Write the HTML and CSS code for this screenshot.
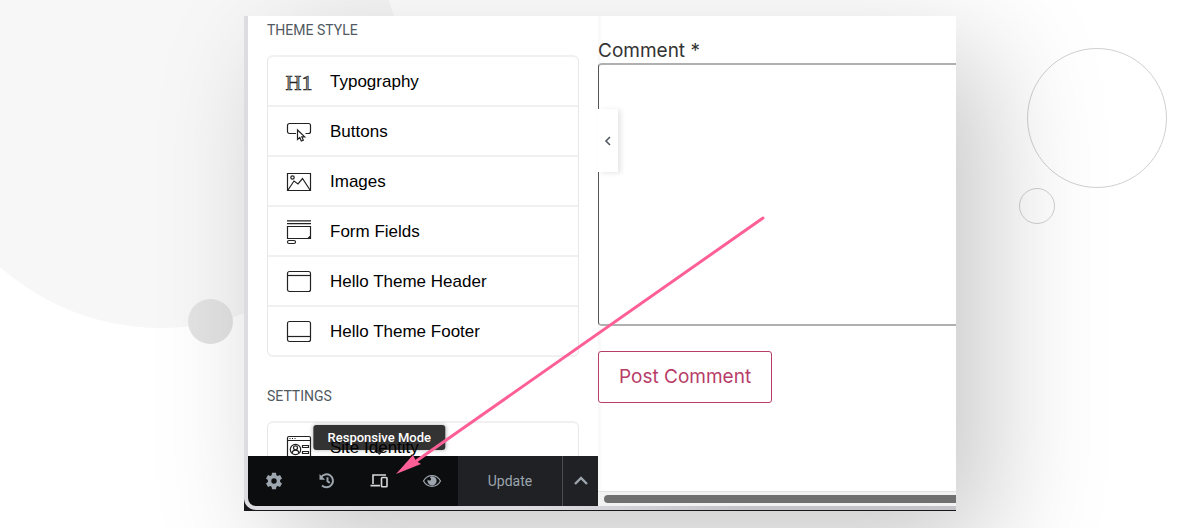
FILE: index.html
```html
<!DOCTYPE html>
<html lang="en">
<head>
<meta charset="utf-8">
<title>Site Settings</title>
<link rel="stylesheet" href="styles.css">
</head>
<body>
<div class="stage">
  <span class="blob blob-large"></span>
  <span class="blob blob-small"></span>
  <span class="ring ring-large"></span>
  <span class="ring ring-small"></span>

  <main class="window">
    <div class="frame">
      <aside class="sidebar">
        <div class="panel">
          <h2 class="heading">THEME STYLE</h2>
          <nav class="card">
            <button class="item" type="button">
              <svg class="item-icon" viewBox="0 0 24 24" aria-hidden="true"><text class="item-glyph" x="12" y="20" text-anchor="middle">H1</text></svg>
              Typography
            </button>
            <button class="item" type="button">
              <svg class="item-icon" viewBox="0 0 24 24"><path d="M9 13.500H2.500a2 2 0 0 1-2-2v-6a2 2 0 0 1 2-2h19a2 2 0 0 1 2 2v6a2 2 0 0 1-2 2h-3M10.500 10v9.500l2.300-2 1.500 3.500 2-.9-1.500-3.300h2.900z"/></svg>
              Buttons
            </button>
            <button class="item" type="button">
              <svg class="item-icon" viewBox="0 0 24 24"><path d="M.5 3.500h23v17H.5zM1 20l6-9 4 3 4.500-5.500L23 20"/><circle cx="5.500" cy="7.500" r="1.700"/></svg>
              Images
            </button>
            <button class="item" type="button">
              <svg class="item-icon" viewBox="0 0 24 24"><path d="M0 .8h24M0 3.700h24M.5 6.500h23v12H.5zM21 18.500l2.500-2.500v2.500z"/><rect x=".5" y="20.500" width="8" height="3" rx="1.500"/></svg>
              Form Fields
            </button>
            <button class="item" type="button">
              <svg class="item-icon" viewBox="0 0 24 24"><rect x=".5" y="1.500" width="23" height="20" rx="2"/><path d="M.5 5.500h23"/></svg>
              Hello Theme Header
            </button>
            <button class="item" type="button">
              <svg class="item-icon" viewBox="0 0 24 24"><rect x=".5" y="1.500" width="23" height="20" rx="2"/><path d="M.5 16.500h23"/></svg>
              Hello Theme Footer
            </button>
          </nav>
          <h2 class="heading">SETTINGS</h2>
          <nav class="card">
            <button class="item" type="button">
              <svg class="item-icon" viewBox="0 0 24 24"><rect x=".5" y=".5" width="23" height="23" rx="1.500"/><path d="M.5 4.500h23M2.500 2.500h1M5 2.500h1M7.500 2.500h1M15.500 9.500h6v2h-6zM15.500 15.500h6v2h-6z"/><circle cx="8.500" cy="13.500" r="5.200"/><circle cx="8.500" cy="11.800" r="2"/><path d="M5 17c.5-2 2-2.800 3.500-2.800s3 .8 3.500 2.800"/></svg>
              Site Identity
            </button>
          </nav>
        </div>
        <footer class="toolbar">
          <button class="tool" type="button" aria-label="Settings">
            <svg viewBox="0 0 20 20"><path fill="currentColor" fill-rule="evenodd" d="M8 1.800h4l.4 2.400 1.300.8 2.300-.9 2 3.300-1.900 1.500v2.200l1.900 1.500-2 3.300-2.300-.9-1.300.8-.4 2.400H8l-.4-2.400-1.300-.8-2.300.9-2-3.300 1.900-1.500V8.900L2 7.400l2-3.300 2.300.9 1.300-.8zM10 7.300a2.700 2.700 0 1 0 0 5.400 2.700 2.700 0 0 0 0-5.400z"/></svg>
          </button>
          <button class="tool" type="button" aria-label="History">
            <svg viewBox="0 0 20 20" class="line"><path d="M4 6.300A6.500 6.500 0 1 1 5 14.500M10.500 6.300v4l2.300 1.500" stroke-width="2"/><path fill="currentColor" stroke="none" d="M2.500 3v5.700h5.700z"/></svg>
          </button>
          <div class="tool-wrap">
            <button class="tool tool-active" type="button" aria-label="Responsive Mode" aria-describedby="tip">
              <svg viewBox="0 0 20 20" class="line"><path d="M4 13V4h13M1.500 14.600h9.500" stroke-width="1.600"/><rect x="12.500" y="6.500" width="5.500" height="9.200" rx=".8" stroke-width="1.600"/></svg>
            </button>
            <span class="tooltip" role="tooltip" id="tip">Responsive Mode</span>
          </div>
          <button class="tool" type="button" aria-label="Preview">
            <svg viewBox="0 0 20 20" class="line"><path d="M1.500 10C3.500 6.400 6.500 4.700 10 4.700s6.500 1.700 8.500 5.300c-2 3.600-5 5.300-8.500 5.300S3.500 13.600 1.500 10z" stroke-width="1.200"/><path fill="currentColor" stroke="none" d="M10 5.200A4.600 4.600 0 1 1 5.700 8.300c.5 1.800 3.500 1.600 3.300-.3-.1-.9-.6-1.400-1.200-1.600.7-.8 1.300-1.200 2.200-1.200z"/></svg>
          </button>
          <button class="update" type="button">Update</button>
          <button class="more" type="button" aria-label="Save options">
            <svg viewBox="0 0 16 16" class="line"><path d="M2 11l6-6 6 6" stroke-width="2.400"/></svg>
          </button>
        </footer>
      </aside>

      <section class="preview">
        <form class="comment-form">
          <label class="label" for="comment">Comment *</label>
          <textarea class="textarea" id="comment"></textarea>
          <button class="post" type="button">Post Comment</button>
        </form>
        <div class="scrollbar"><span class="thumb"></span></div>
        <button class="handle" type="button" aria-label="Hide panel">
          <svg viewBox="0 0 10 10" class="line"><path d="M7 1L3 5l4 4" stroke-width="1.600"/></svg>
        </button>
      </section>
    </div>
    <svg class="pointer" viewBox="0 0 712 495"><path d="M519 202L168 448" fill="none" stroke="#fd5f96" stroke-width="3" stroke-linecap="round"/><path d="M152 458l17-19 3 6 5 3z" fill="#fd5f96"/></svg>
  </main>
</div>
</body>
</html>
```
FILE: styles.css
```css
* {
  box-sizing: border-box;
}

body {
  margin: 0;
  background: #fff;
  font-family: Roboto, "Liberation Sans", sans-serif;
}

button {
  margin: 0;
  padding: 0;
  border: 0;
  background: none;
  font: inherit;
  color: inherit;
}

.stage {
  position: relative;
  height: 100vh;
  padding-top: 16px;
  overflow: hidden;
}

/* Backdrop shapes */
.blob,
.ring {
  position: absolute;
  border-radius: 50%;
}

.blob-large {
  left: -82px;
  top: -158px;
  width: 486px;
  height: 486px;
  background: #f7f7f7;
}

.blob-small {
  left: 188px;
  top: 299px;
  width: 45px;
  height: 45px;
  background: #e3e3e3;
}

.ring {
  border: 1px solid #d0d0d0;
}

.ring-large {
  left: 1027px;
  top: 48px;
  width: 140px;
  height: 140px;
}

.ring-small {
  left: 1019px;
  top: 188px;
  width: 36px;
  height: 36px;
}

/* Application window */
.window {
  position: relative;
  width: min(712px, 100%);
  height: calc(100vh - 33px);
  margin: 0 auto;
  padding-bottom: 1px;
  background: #17171a;
  box-shadow: 32px 36px 110px rgba(0, 0, 0, 0.22);
}

.frame {
  display: flex;
  height: 100%;
  padding: 0 0 4px 4px;
  border-bottom-left-radius: 12px;
  background: linear-gradient(90deg, #dcdce1 40%, #c4c4c8 70%);
}

.sidebar {
  display: flex;
  flex-direction: column;
  width: 350px;
  border-bottom-left-radius: 8px;
  background: #fff;
}

.panel {
  flex: 1;
  min-height: 0;
  padding: 6px 19px 0;
  overflow: hidden;
}

.heading {
  margin: 0 0 17px;
  font-size: 14px;
  font-weight: 400;
  line-height: 16px;
  color: #515962;
}

.card + .heading {
  margin-top: 31px;
}

.card {
  display: flex;
  flex-direction: column;
  border: 1px solid #e8e8ea;
  border-width: 2px 1px;
  border-color: #f0f0f1 #e8e8ea;
  border-radius: 6px;
}

.item {
  display: flex;
  align-items: center;
  gap: 19px;
  height: 48px;
  padding: 2px 0 0 19px;
  font-family: "Liberation Sans", sans-serif;
  font-size: 17px;
  color: #000;
}

.item + .item {
  height: 50px;
  border-top: 2px solid #f0f0f1;
}

.item-icon {
  width: 24px;
  height: 24px;
  overflow: visible;
  fill: none;
  stroke: #222;
  stroke-width: 1.2;
}

.item-glyph {
  fill: #999;
  stroke-width: 0.7;
  font-family: "Liberation Serif", serif;
  font-size: 22px;
}

/* Bottom toolbar */
.toolbar {
  display: grid;
  grid-template-columns: repeat(4, 1fr) 104px 36px;
  height: 50px;
  border-bottom-left-radius: 8px;
  background: #0c0d0e;
  color: #9da5ae;
}

.tool,
.more {
  display: flex;
  align-items: center;
  justify-content: center;
}

.tool {
  width: 100%;
  height: 100%;
}

.tool svg {
  width: 20px;
  height: 20px;
}

.line {
  fill: none;
  stroke: currentColor;
}

.tool-wrap {
  position: relative;
}

.tool-active {
  color: #d5d8dc;
}

.tooltip {
  position: absolute;
  bottom: 56px;
  left: 50%;
  padding: 0 14px;
  border-radius: 3px;
  background: rgba(0, 0, 0, 0.8);
  box-shadow: 0 0 4px rgba(0, 0, 0, 0.3);
  font-size: 13px;
  font-weight: 500;
  line-height: 25px;
  white-space: nowrap;
  color: #fff;
  transform: translateX(-50%);
}

.tooltip::after {
  content: "";
  position: absolute;
  top: 100%;
  left: 50%;
  margin-left: -5px;
  border: 5px solid transparent;
  border-top-color: rgba(0, 0, 0, 0.8);
}

.update,
.more {
  background: #1f2124;
}

.update {
  font-size: 14px;
}

.more {
  border-left: 1px solid #4a4c50;
}

.more svg {
  width: 16px;
  height: 16px;
}

/* Page preview */
.preview {
  position: relative;
  display: flex;
  flex: 1;
  flex-direction: column;
  min-width: 0;
  background: linear-gradient(90deg, #f7f7f7, #fff 5px);
  font-family: Inter, "Liberation Sans", sans-serif;
  font-size: 19px;
}

.comment-form {
  display: flex;
  flex: 1;
  flex-direction: column;
  align-items: flex-start;
  min-height: 0;
  padding-top: 23px;
}

.label {
  line-height: 24px;
  color: #333;
}

.textarea {
  width: 100%;
  height: 263px;
  border: 1px solid #666;
  border-width: 2px 0 2px 1px;
  border-color: #b0b0b0 #666 #b0b0b0 #555;
  border-radius: 4px 0 0 4px;
  background: #fff;
  resize: none;
}

.post {
  margin-top: 25px;
  padding: 0 20px;
  border: 1px solid #b83d68;
  border-radius: 3px;
  background: #fff;
  line-height: 50px;
  color: #b83d68;
}

.scrollbar {
  height: 15px;
  padding: 3px 0 3px 6px;
  border-top: 1px solid #e2e2e2;
  background: #f2f2f2;
}

.thumb {
  display: block;
  height: 8px;
  border-radius: 4px 0 0 4px;
  background: #707070;
}

.handle {
  position: absolute;
  top: 93px;
  left: 0;
  display: flex;
  align-items: center;
  justify-content: center;
  width: 20px;
  height: 63px;
  background: #fff;
  box-shadow: 3px 1px 5px rgba(0, 0, 0, 0.1);
  color: #515962;
}

.handle svg {
  width: 10px;
  height: 10px;
}

.pointer {
  position: absolute;
  top: 0;
  left: 0;
  width: 712px;
  height: 495px;
  pointer-events: none;
}
```
